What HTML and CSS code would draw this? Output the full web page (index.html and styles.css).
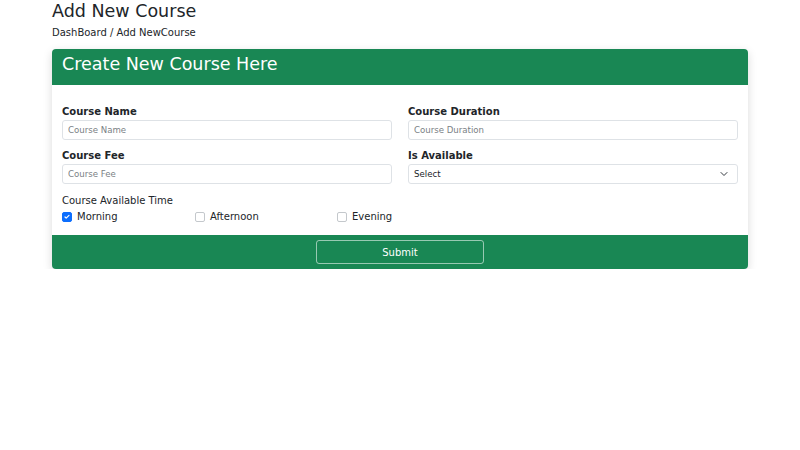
FILE: index.html
```html
<!DOCTYPE html>
<html lang="en">
<head>
  <meta charset="UTF-8">
  <meta name="viewport" content="width=device-width, initial-scale=1.0">
  <title>Add New Course</title>
  <link rel="stylesheet" href="styles.css">
</head>
<body>

  <div class="container">
    <!-- Page heading -->
    <h1 class="page-title">Add New Course</h1>
    <div class="breadcrumb">DashBoard / Add NewCourse</div>

    <!-- Course form card -->
    <form class="card">
      <div class="card-header">Create New Course Here</div>

      <div class="card-body">
        <div class="form-grid">
          <div class="field">
            <label for="name">Course Name</label>
            <input id="name" type="text" placeholder="Course Name">
          </div>
          <div class="field">
            <label for="duration">Course Duration</label>
            <input id="duration" type="text" placeholder="Course Duration">
          </div>
          <div class="field">
            <label for="fee">Course Fee</label>
            <input id="fee" type="text" placeholder="Course Fee">
          </div>
          <div class="field">
            <label for="available">Is Available</label>
            <div class="select">
              <span>Select</span>
              <svg width="8" height="8" viewBox="0 0 16 16"><path d="M2 5l6 6 6-6" fill="none" stroke="#343a40" stroke-width="2" stroke-linecap="round" stroke-linejoin="round"/></svg>
            </div>
          </div>
        </div>

        <div class="time-title">Course Available Time</div>
        <div class="checks">
          <div class="check">
            <span class="box checked">
              <svg width="8" height="8" viewBox="0 0 20 20"><path d="M5 10l3 3 7-7" fill="none" stroke="#fff" stroke-width="3" stroke-linecap="round" stroke-linejoin="round"/></svg>
            </span>
            Morning
          </div>
          <div class="check"><span class="box"></span> Afternoon</div>
          <div class="check"><span class="box"></span> Evening</div>
        </div>
      </div>

      <div class="card-footer">
        <button type="button" class="btn-submit">Submit</button>
      </div>
    </form>
  </div>

</body>
</html>
```

FILE: styles.css
```css
body {
  margin: 0;
  font-family: "DejaVu Sans", sans-serif;
  color: #212529;
  background-color: #fff;
}

.container {
  width: 696px;
  margin: 0 auto;
}

/* Heading */
.page-title {
  margin: 0;
  padding-top: 1px;
  font-size: 17.5px;
  font-weight: normal;
  line-height: 20px;
}

.breadcrumb {
  margin-top: 5px;
  font-size: 10px;
  line-height: 13px;
}

/* Card */
.card {
  margin-top: 10px;
  border-radius: 4px;
  overflow: hidden;
  box-shadow: 0 3px 10px rgba(0, 0, 0, 0.15);
}

.card-header {
  height: 36px;
  box-sizing: border-box;
  padding: 3px 10px 0;
  background-color: #198754;
  color: #fff;
  font-size: 17.5px;
  line-height: 24px;
}

.card-body {
  padding: 21px 10px 10px;
}

.form-grid {
  display: grid;
  grid-template-columns: 1fr 1fr;
  column-gap: 16px;
  row-gap: 10px;
}

.field label {
  display: block;
  font-size: 10px;
  font-weight: bold;
  line-height: 12px;
  margin-bottom: 2px;
}

.field input,
.select {
  display: block;
  width: 100%;
  height: 20px;
  box-sizing: border-box;
  border: 1px solid #dee2e6;
  border-radius: 3px;
  padding: 0 5px;
  font-family: inherit;
  font-size: 8.6px;
  color: #212529;
  outline: none;
}

.field input::placeholder {
  color: #7a7f85;
}

.select {
  display: flex;
  align-items: center;
  justify-content: space-between;
  padding-right: 9px;
}

/* Checkboxes */
.time-title {
  margin-top: 11px;
  font-size: 10px;
  line-height: 12px;
}

.checks {
  display: grid;
  grid-template-columns: 133px 142px 142px;
  margin-top: 2px;
  font-size: 10px;
  line-height: 16px;
}

.check {
  display: flex;
  align-items: center;
  gap: 5px;
}

.box {
  width: 8px;
  height: 8px;
  border: 1px solid #c4c8cc;
  border-radius: 2px;
  display: flex;
  align-items: center;
  justify-content: center;
}

.box.checked {
  background-color: #0d6efd;
  border-color: #0d6efd;
}

/* Footer */
.card-footer {
  height: 34px;
  background-color: #198754;
  display: flex;
  align-items: center;
  justify-content: center;
}

.btn-submit {
  width: 168px;
  height: 24px;
  border: 1px solid rgba(255, 255, 255, 0.55);
  border-radius: 3px;
  background: transparent;
  color: #fff;
  font-family: inherit;
  font-size: 10px;
}
```
